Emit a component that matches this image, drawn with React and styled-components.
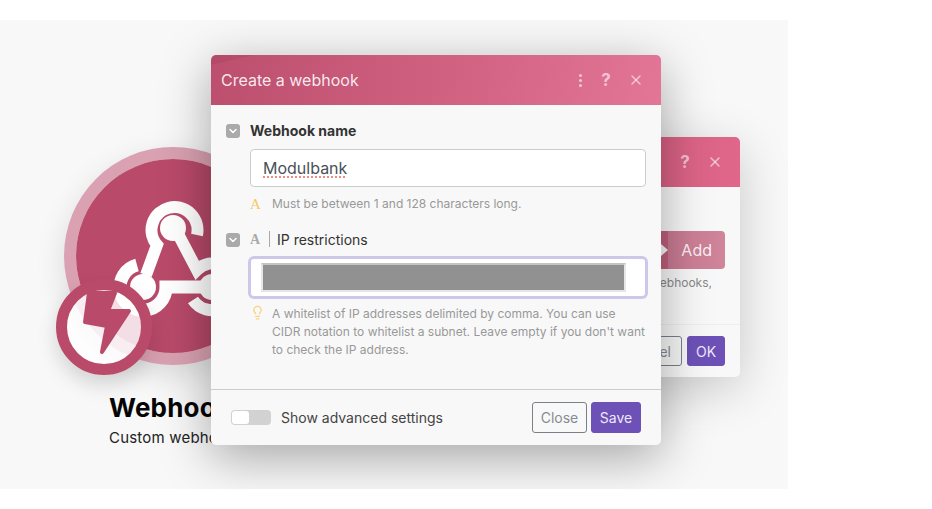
import styled, { createGlobalStyle } from 'styled-components'
import { ChevronDown, Lightbulb, X } from 'lucide-react'

const GlobalStyle = createGlobalStyle`
  html, body {
    margin: 0;
    background: #fff;
    font-family: Inter, "Liberation Sans", sans-serif;
  }
`

const Page = styled.div`
  width: 932px;
  height: 509px;
  padding-top: 20px;
  box-sizing: border-box;
  overflow: hidden;
`

const Canvas = styled.div`
  position: relative;
  width: 788px;
  height: 469px;
  background: #f8f8f8;
  overflow: hidden;
  padding: 127px 0 0 56px;
  box-sizing: border-box;
`

const Hero = styled.div`
  display: flex;
  flex-direction: column;
`

const LogoWrap = styled.div`
  position: relative;
  width: 226px;
  height: 226px;
`

const BigCircle = styled.div`
  position: absolute;
  left: 8px;
  top: 0;
  width: 194px;
  height: 194px;
  border: 12px solid rgba(185, 74, 106, 0.5);
  border-radius: 50%;
  background: linear-gradient(90deg, #b94a6a 55%, #a84462);
  background-clip: padding-box;
  box-shadow: 0 10px 30px rgba(0, 0, 0, 0.12);
`

const LogoSvg = styled.svg`
  position: absolute;
  left: -12px;
  top: -12px;
`

const Badge = styled.div`
  position: absolute;
  left: 0;
  top: 132px;
  width: 74px;
  height: 74px;
  border: 11px solid #b94a6a;
  border-radius: 50%;
  background: rgba(255, 255, 255, 0.82);
  box-shadow: 0 10px 20px rgba(0, 0, 0, 0.15);
  display: flex;
  align-items: center;
  justify-content: center;
`

const HeroTitle = styled.div`
  margin: 19px 0 0 53px;
  font-size: 26px;
  line-height: 32px;
  font-weight: 700;
  letter-spacing: 0.2px;
  color: #050505;
  white-space: nowrap;
`

const HeroSub = styled.div`
  margin: 4px 0 0 53px;
  font-size: 15px;
  line-height: 20px;
  letter-spacing: 0.2px;
  color: #222;
  white-space: nowrap;
`

const Modal = styled.div`
  position: absolute;
  left: ${p => p.$left}px;
  top: ${p => p.$top}px;
  width: ${p => p.$width}px;
  height: ${p => p.$height}px;
  display: flex;
  flex-direction: column;
  background: #f8f8f8;
  border-radius: 5px;
  overflow: hidden;
  box-shadow: 0 12px 50px rgba(0, 0, 0, ${p => p.$shadow});
`

const Header = styled.div`
  height: 50px;
  flex: none;
  display: flex;
  align-items: center;
  padding: 0 17px 0 10px;
  background: ${p => p.$back
    ? 'linear-gradient(90deg, #b94a6a, #e0678a)'
    : 'linear-gradient(to bottom right, rgba(0, 0, 0, 0.05) 50%, transparent 50%) 0 0 / 43px 10px no-repeat, linear-gradient(100deg, #bc4e6e 0%, #cf6080 50%, #e37597 100%)'};
`

const HeaderTitle = styled.div`
  flex: 1;
  font-size: 16px;
  color: rgba(255, 255, 255, 0.88);
`

const HeaderIcons = styled.div`
  display: flex;
  align-items: center;
  gap: 17px;
  color: rgba(255, 255, 255, 0.6);
`

const Help = styled.span`
  font-size: 17px;
  font-weight: 700;
  line-height: 1;
  width: 10px;
  text-align: center;
`

const Dots = styled.span`
  display: flex;
  flex-direction: column;
  gap: 2px;
  width: 10px;
  margin-right: -1px;
  align-items: center;

  i {
    display: block;
    width: 3px;
    height: 3px;
    border-radius: 50%;
    background: currentColor;
  }
`

const Body = styled.div`
  flex: 1;
  padding: 19px 15px 0 15px;
`

const LabelRow = styled.div`
  display: flex;
  align-items: center;
  height: 14px;
  font-size: 14px;
  color: #333;
`

const LabelText = styled.span`
  margin-top: -2px;
  font-weight: ${p => p.$bold ? 700 : 400};
`

const Toggle = styled.span`
  width: 14px;
  height: 14px;
  border-radius: 3px;
  background: #aaa;
  color: #fff;
  display: flex;
  align-items: center;
  justify-content: center;
  margin-right: 10px;
  flex: none;
`

const TypeMark = styled.span`
  font-family: "Liberation Serif", serif;
  font-weight: ${p => p.$warn ? 400 : 700};
  font-size: ${p => p.$warn ? 15 : 14}px;
  line-height: 14px;
  width: 12px;
  color: ${p => p.$warn ? '#f5c86a' : '#aaa'};
  flex: none;
`

const Divider = styled.span`
  width: 1px;
  height: 16px;
  background: #aaa;
  margin: -2px 7px 0 7px;
`

const Input = styled.div`
  margin: 11px 0 0 24px;
  height: 36px;
  box-sizing: content-box;
  border: 1px solid #ccc;
  border-radius: 4px;
  background: #fff;
  display: flex;
  align-items: center;
  padding: 0 12px;
  font-size: 16px;
  color: #4a5058;

  span {
    text-decoration: underline dotted #f06058;
    text-underline-offset: 3px;
  }
`

const FocusedInput = styled.div`
  margin: 12px 1px 0 25px;
  height: 37px;
  border-radius: 3px;
  background: #fff;
  box-shadow: 0 0 0 3px #cfc7e9;
  display: flex;
  align-items: center;
  padding: 0 19px 0 10px;
`

const RedactedBar = styled.div`
  flex: 1;
  height: 25px;
  background: #919191;
  border: 2px solid #e6e6e6;
  border-top-color: #c4c4c4;
`

const Hint = styled.div`
  display: flex;
  margin: ${p => p.$mt}px 0 ${p => p.$mb}px 24px;
  font-size: 12px;
  line-height: 18px;
  color: #999;
  white-space: nowrap;
`

const HintIcon = styled.span`
  width: 22px;
  flex: none;
  color: #f8d27e;
  display: flex;
  padding-top: ${p => p.$top}px;
  align-items: flex-start;
`

const Footer = styled.div`
  flex: none;
  height: 55px;
  border-top: 1px solid #ccc;
  display: flex;
  align-items: center;
  padding: 0 20px;
  box-sizing: content-box;
`

const SwitchTrack = styled.span`
  width: 40px;
  height: 15px;
  border-radius: 4px;
  background: #d2d2d2;
  display: flex;
  padding: 1px;
  box-sizing: border-box;
  margin-right: 10px;

  i {
    display: block;
    width: 17px;
    background: #fff;
    border-radius: 3px;
  }
`

const SwitchLabel = styled.span`
  flex: 1;
  font-size: 14px;
  color: #444;
`

const Button = styled.button`
  font: inherit;
  font-size: 14px;
  height: ${p => p.$small ? 30 : 31}px;
  width: ${p => p.$w}px;
  padding: 0;
  margin-left: ${p => p.$ml || 0}px;
  border-radius: 3px;
  border: 1px solid ${p => p.$primary ? '#6d51b7' : '#7a8088'};
  background: ${p => p.$primary ? '#6d51b7' : 'transparent'};
  color: ${p => p.$primary ? '#eee8fa' : '#868b92'};
`

const BackBody = styled.div`
  flex: 1;
  padding: 44px 15px 0 15px;
`

const AddRow = styled.div`
  display: flex;
  justify-content: flex-end;
`

const AddButton = styled.div`
  position: relative;
  width: 100%;
  height: 38px;
  border-radius: 4px;
  background: linear-gradient(90deg, #c0607c calc(100% - 57px), #c97a92 calc(100% - 57px), #d0859b);
  color: rgba(255, 255, 255, 0.9);
  font-size: 16px;
  display: flex;
  align-items: center;
  justify-content: flex-end;
  padding-right: 13px;
  box-sizing: border-box;

  &::after {
    content: '';
    position: absolute;
    right: 57px;
    top: 13px;
    border: 6px solid transparent;
    border-left: 7px solid #f8f8f8;
    border-right: 0;
  }
`

const BackHint = styled.div`
  margin-top: 5px;
  text-align: right;
  font-size: 12px;
  line-height: 18px;
  color: #888;
  padding-right: 13px;
`

const BackFooter = styled.div`
  flex: none;
  height: 52px;
  border-top: 1px solid #eee;
  display: flex;
  align-items: center;
  justify-content: flex-end;
  padding: 0 15px;
`

// coordinates are page pixels, taken straight from the screenshot
// three discs, each with a line that turns into the ring round the next disc
function WebhookMark() {
  return (
    <LogoSvg width="218" height="218" viewBox="64 147 218 218">
      <g fill="none" stroke="#fff" strokeWidth="12">
        <path d="M197 235A23 23 0 1 0 157 245L146 275" />
        <path d="M177 232L197 270A23 23 0 0 1 222 265" />
        <path d="M137 265A23 23 0 1 0 166 287H212" strokeWidth="13" />
        <path d="M193 300A23 23 0 0 0 222 308" />
      </g>
      <circle cx="173" cy="228" r="13" fill="#fff" />
      <circle cx="143" cy="287" r="13" fill="#fff" />
      <circle cx="212" cy="287" r="13" fill="#fff" />
    </LogoSvg>
  )
}

function Bolt() {
  return (
    <svg width="60" height="72" viewBox="74 290 60 72">
      <path
        d="M89 292H115L108 310H129L102 351L107 325L85 321Z"
        fill="#b94a6a"
        stroke="#b94a6a"
        strokeWidth="4"
        strokeLinejoin="round"
      />
    </svg>
  )
}

export default function App() {
  return (
    <Page>
      <GlobalStyle />
      <Canvas>
        <Hero>
          <LogoWrap>
            <BigCircle>
              <WebhookMark />
            </BigCircle>
            <Badge>
              <Bolt />
            </Badge>
          </LogoWrap>
          <HeroTitle>Webhooks</HeroTitle>
          <HeroSub>Custom webhooks</HeroSub>
        </Hero>

        <Modal $left={340} $top={117} $width={400} $height={240} $shadow={0.2}>
          <Header $back>
            <HeaderTitle />
            <HeaderIcons>
              <Help>?</Help>
              <X size={16} />
            </HeaderIcons>
          </Header>
          <BackBody>
            <AddRow>
              <AddButton>Add</AddButton>
            </AddRow>
            <BackHint>Custom webhooks,</BackHint>
          </BackBody>
          <BackFooter>
            <Button $small $w={68}>Cancel</Button>
            <Button $small $primary $w={38} $ml={5}>OK</Button>
          </BackFooter>
        </Modal>

        <Modal $left={211} $top={35} $width={450} $height={390} $shadow={0.34}>
          <Header>
            <HeaderTitle>Create a webhook</HeaderTitle>
            <HeaderIcons>
              <Dots><i /><i /><i /></Dots>
              <Help>?</Help>
              <X size={16} />
            </HeaderIcons>
          </Header>
          <Body>
            <LabelRow>
              <Toggle><ChevronDown size={12} strokeWidth={3} /></Toggle>
              <LabelText $bold>Webhook name</LabelText>
            </LabelRow>
            <Input><span>Modulbank</span></Input>
            <Hint $mt={8} $mb={20}>
              <HintIcon $top={2}><TypeMark $warn>A</TypeMark></HintIcon>
              Must be between 1 and 128 characters long.
            </Hint>
            <LabelRow>
              <Toggle><ChevronDown size={12} strokeWidth={3} /></Toggle>
              <TypeMark>A</TypeMark>
              <Divider />
              <LabelText>IP restrictions</LabelText>
            </LabelRow>
            <FocusedInput>
              <RedactedBar />
            </FocusedInput>
            <Hint $mt={9} $mb={0}>
              <HintIcon $top={0}><Lightbulb size={15} /></HintIcon>
              <span>
                A whitelist of IP addresses delimited by comma. You can use<br />
                CIDR notation to whitelist a subnet. Leave empty if you don't want<br />
                to check the IP address.
              </span>
            </Hint>
          </Body>
          <Footer>
            <SwitchTrack><i /></SwitchTrack>
            <SwitchLabel>Show advanced settings</SwitchLabel>
            <Button $w={55}>Close</Button>
            <Button $primary $w={50} $ml={4}>Save</Button>
          </Footer>
        </Modal>
      </Canvas>
    </Page>
  )
}
